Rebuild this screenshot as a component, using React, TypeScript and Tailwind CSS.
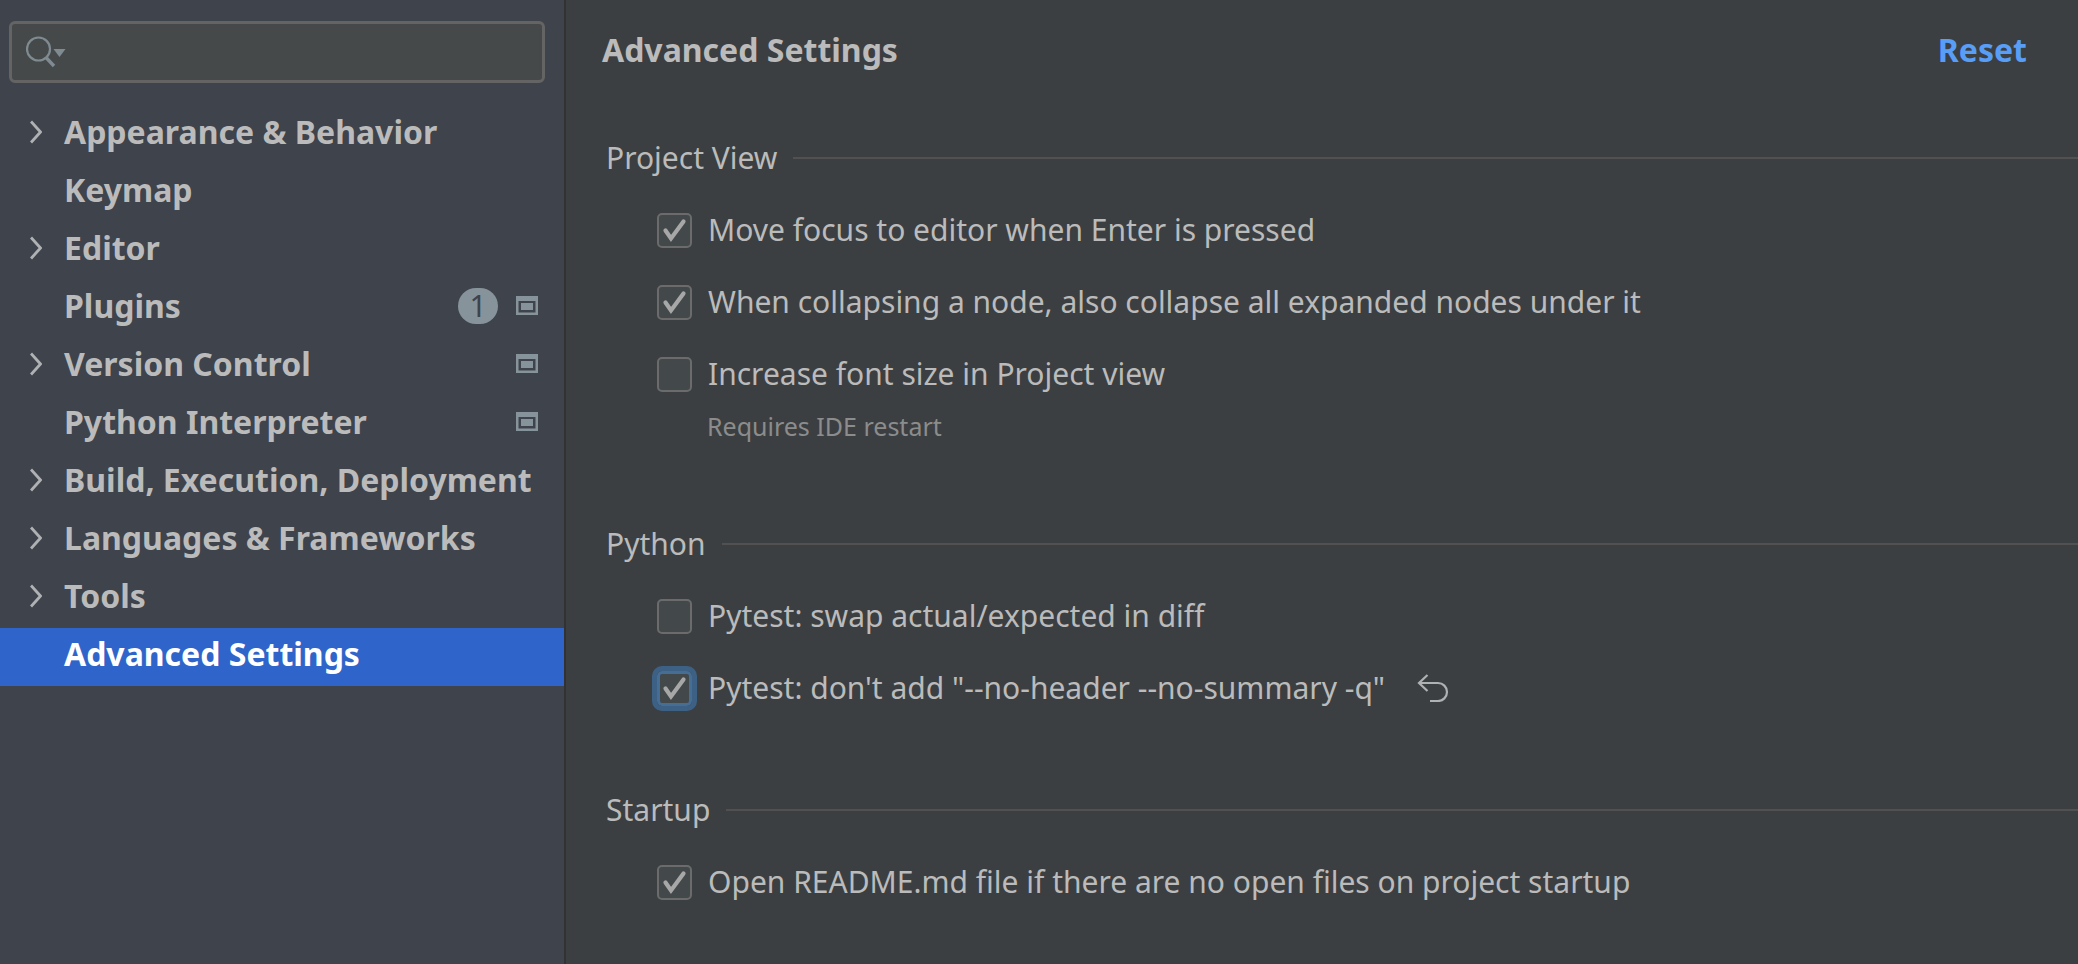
import { useState } from "react"
import clsx from "clsx"

interface NavItem {
  label: string
  expandable?: boolean
  badge?: number
  projectLevel?: boolean
}

interface Option {
  id: string
  label: string
  checked?: boolean
  focused?: boolean
  modified?: boolean
  hint?: string
}

interface Section {
  title: string
  options: Option[]
}

const navItems: NavItem[] = [
  { label: "Appearance & Behavior", expandable: true },
  { label: "Keymap" },
  { label: "Editor", expandable: true },
  { label: "Plugins", badge: 1, projectLevel: true },
  { label: "Version Control", expandable: true, projectLevel: true },
  { label: "Python Interpreter", projectLevel: true },
  { label: "Build, Execution, Deployment", expandable: true },
  { label: "Languages & Frameworks", expandable: true },
  { label: "Tools", expandable: true },
  { label: "Advanced Settings" },
]

const sections: Section[] = [
  {
    title: "Project View",
    options: [
      { id: "focus-editor", label: "Move focus to editor when Enter is pressed", checked: true },
      {
        id: "collapse-nodes",
        label: "When collapsing a node, also collapse all expanded nodes under it",
        checked: true,
      },
      { id: "font-size", label: "Increase font size in Project view", hint: "Requires IDE restart" },
    ],
  },
  {
    title: "Python",
    options: [
      { id: "pytest-swap", label: "Pytest: swap actual/expected in diff" },
      {
        id: "pytest-header",
        label: `Pytest: don't add "--no-header --no-summary -q"`,
        checked: true,
        focused: true,
        modified: true,
      },
    ],
  },
  {
    title: "Startup",
    options: [
      { id: "open-readme", label: "Open README.md file if there are no open files on project startup", checked: true },
    ],
  },
]

function SearchIcon() {
  return (
    <svg className="h-8 w-10 shrink-0" viewBox="0 0 40 32" fill="none" aria-hidden="true">
      <circle cx="12.5" cy="13" r="11.5" stroke="#7f8b91" strokeWidth="2.2" />
      <path d="M20 21.5l8 8.500" stroke="#7f8b91" strokeWidth="3.4" />
      <path d="M27.500 13h12l-6 8z" fill="#7f8b91" />
    </svg>
  )
}

function ChevronIcon() {
  return (
    <svg className="h-6 w-3" viewBox="0 0 12 24" fill="none" aria-hidden="true">
      <path d="M1 1.5L10.500 12 1 22.500" stroke="#afb1b3" strokeWidth="2.8" />
    </svg>
  )
}

function ProjectIcon() {
  return (
    <svg className="h-5 w-[22px] shrink-0" viewBox="0 0 22 20" aria-hidden="true">
      <path fillRule="evenodd" d="M0 0h22v19H0zM2.500 5v11.500h17V5z" fill="#87939a" />
      <path d="M5 7h12v7H5z" fill="#87939a" />
    </svg>
  )
}

function UndoIcon() {
  return (
    <svg className="h-7 w-8" viewBox="0 0 32 28" fill="none" stroke="#afb1b3" strokeWidth="2.2" aria-hidden="true">
      <path d="M10.500 1L2 9l8.500 8" />
      <path d="M2 9h19a9 9 0 0 1 0 18h-8" />
    </svg>
  )
}

function OptionRow({ option }: { option: Option }) {
  const [checked, setChecked] = useState(Boolean(option.checked))

  return (
    <>
      <div className="flex h-18 items-center">
        <input
          id={option.id}
          type="checkbox"
          checked={checked}
          onChange={(e) => setChecked(e.target.checked)}
          className={clsx(
            "peer h-[35px] w-[35px] shrink-0 appearance-none rounded-[5px] bg-[#43494a]",
            option.focused ? "border-3 border-[#466d94] outline-5 outline-[#3d6185]" : "border-2 border-[#6b6b6b]",
          )}
        />
        <svg
          className="pointer-events-none invisible -ml-[35px] h-[35px] w-[35px] shrink-0 peer-checked:visible"
          viewBox="0 0 35 35"
          fill="none"
          aria-hidden="true"
        >
          <path d="M8.500 17.500l5.500 8L26.500 8.500" stroke="#a7a7a7" strokeWidth="4.2" strokeLinecap="round" />
        </svg>
        <label htmlFor={option.id} className="ml-4 whitespace-nowrap">
          {option.label}
        </label>
        {option.modified && (
          <button type="button" aria-label="Restore default" className="ml-8">
            <UndoIcon />
          </button>
        )}
      </div>
      {option.hint && <p className="pb-4 pl-[50px] text-[25px] leading-8 text-[#8c8c8c]">{option.hint}</p>}
    </>
  )
}

export default function App() {
  const [selected, setSelected] = useState("Advanced Settings")

  return (
    <div className="flex min-h-screen bg-[#3c3f41] font-['Noto_Sans',sans-serif] text-[30px] leading-10 text-[#bbbbbb]">
      <aside className="w-[566px] shrink-0 border-r-2 border-[#323232] bg-[#3e434c]">
        <div className="mt-[21px] mr-[19px] mb-[23px] ml-[9px] flex h-[62px] items-center rounded-md border-[3px] border-[#646464] bg-[#45494a] pl-3.5">
          <SearchIcon />
          <input type="text" aria-label="Search settings" className="ml-2 min-w-0 flex-1 outline-none" />
        </div>
        <nav>
          {navItems.map((item) => (
            <button
              key={item.label}
              type="button"
              onClick={() => setSelected(item.label)}
              className={clsx(
                "flex h-[58px] w-full items-center pr-[26px] pb-1.5 pl-[30px] text-left text-[32px] font-bold",
                item.label === selected && "bg-[#2f65ca] text-white",
              )}
            >
              <span className="w-[34px] shrink-0">{item.expandable && <ChevronIcon />}</span>
              <span className="flex-1 whitespace-nowrap">{item.label}</span>
              {item.badge && (
                <span className="mr-4.5 flex h-9 w-10 items-center justify-center rounded-full bg-[#87939a] text-[30px] font-normal text-[#3e434c]">
                  {item.badge}
                </span>
              )}
              {item.projectLevel && <ProjectIcon />}
            </button>
          ))}
        </nav>
      </aside>

      <main className="min-w-0 flex-1 pt-[30px]">
        <header className="mb-[52px] flex justify-between pr-[51px] pl-9 text-[32px] leading-10 font-bold">
          <h1>Advanced Settings</h1>
          <a href="#reset" className="text-[#589df6]">
            Reset
          </a>
        </header>
        {sections.map((section) => (
          <section key={section.title} className="mb-[50px] pl-10">
            <div className="flex h-18 items-center gap-4">
              <h2>{section.title}</h2>
              <div className="h-0.5 flex-1 bg-[#515151]" />
            </div>
            <div className="pl-[51px]">
              {section.options.map((option) => (
                <OptionRow key={option.id} option={option} />
              ))}
            </div>
          </section>
        ))}
      </main>
    </div>
  )
}
